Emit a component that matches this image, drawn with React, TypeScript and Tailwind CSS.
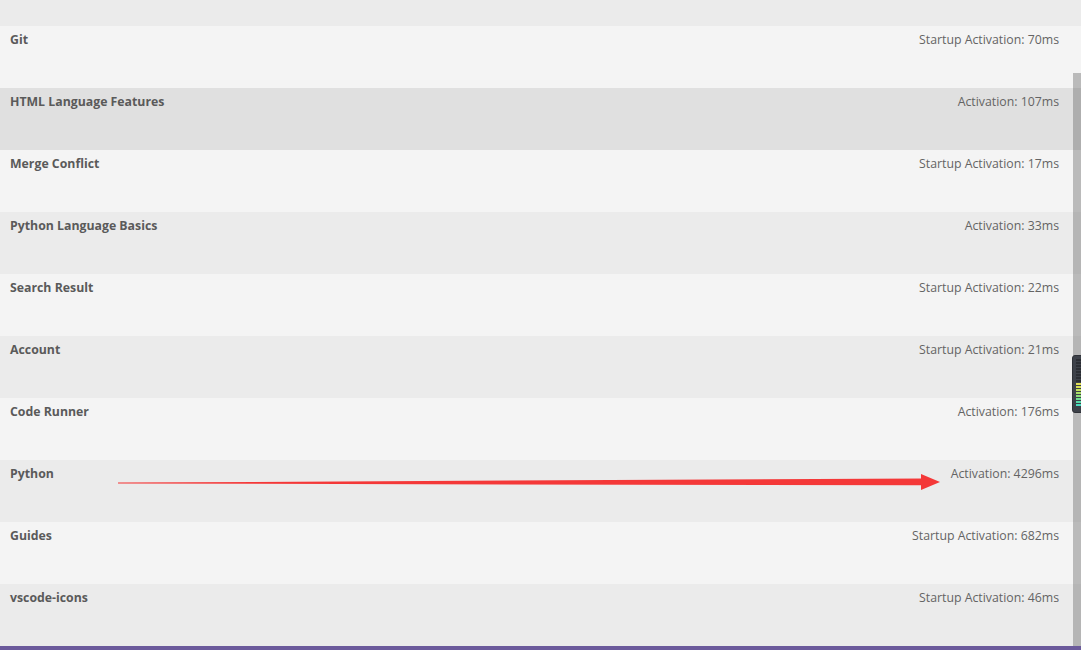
import React from "react";

const rows = [
  { name: "Git", act: "Startup Activation: 70ms", bg: "bg-[#f4f4f4]" },
  { name: "HTML Language Features", act: "Activation: 107ms", bg: "bg-[#e0e0e0]" },
  { name: "Merge Conflict", act: "Startup Activation: 17ms", bg: "bg-[#f4f4f4]" },
  { name: "Python Language Basics", act: "Activation: 33ms", bg: "bg-[#ebebeb]" },
  { name: "Search Result", act: "Startup Activation: 22ms", bg: "bg-[#f4f4f4]" },
  { name: "Account", act: "Startup Activation: 21ms", bg: "bg-[#ebebeb]" },
  { name: "Code Runner", act: "Activation: 176ms", bg: "bg-[#f4f4f4]" },
  { name: "Python", act: "Activation: 4296ms", bg: "bg-[#ebebeb]" },
  { name: "Guides", act: "Startup Activation: 682ms", bg: "bg-[#f4f4f4]" },
  { name: "vscode-icons", act: "Startup Activation: 46ms", bg: "bg-[#ebebeb]" },
];

const meterColors = [
  "#2b2e34", "#2b2e34", "#2b2e34", "#2b2e34", "#2b2e34", "#2b2e34", "#2b2e34", "#2b2e34",
  "#e3df55", "#d6e055", "#c3e05a", "#a9de66", "#8ddc78", "#6fdb90", "#57dcaa", "#4adcc0",
];

export default function App() {
  return (
    <div
      className="relative w-[1081px] h-[650px] overflow-hidden bg-[#f4f4f4] flex flex-col"
      style={{ fontFamily: '"Open Sans", "Noto Sans", sans-serif' }}
    >
      <div className="h-[26px] shrink-0 bg-[#ebebeb]" />
      {rows.map((r) => (
        <div
          key={r.name}
          className={`h-[62px] shrink-0 flex justify-between items-start pl-[10px] pr-[22px] pt-[4px] ${r.bg}`}
        >
          <span className="text-[12.3px] leading-[20px] font-bold text-[#5a5a5a]">{r.name}</span>
          <span className="text-[12.3px] leading-[20px] text-[#646464]">{r.act}</span>
        </div>
      ))}
      <div className="h-[4px] shrink-0 bg-[#6b5a9b]" />

      {/* scrollbar */}
      <div className="absolute right-0 top-[73px] w-[8px] h-[573px] bg-[rgba(100,100,100,0.4)]" />

      {/* meter widget */}
      <div className="absolute left-[1072px] top-[355px] w-[14px] h-[58px] rounded-[3px] bg-[#3d4149] border border-[#2e3137] flex flex-col gap-[1px] pt-[3px] pl-[3px]">
        {meterColors.map((c, i) => (
          <div key={i} className="w-[5px] h-[2px]" style={{ backgroundColor: c }} />
        ))}
      </div>

      {/* red arrow annotation */}
      <svg className="absolute left-0 top-0" width="1081" height="650">
        <polygon points="118,482.6 923,478.5 923,485.2 118,483.6" fill="#f43838" />
        <polygon points="921,474 940,482 921,490" fill="#f43838" />
      </svg>
    </div>
  );
}
